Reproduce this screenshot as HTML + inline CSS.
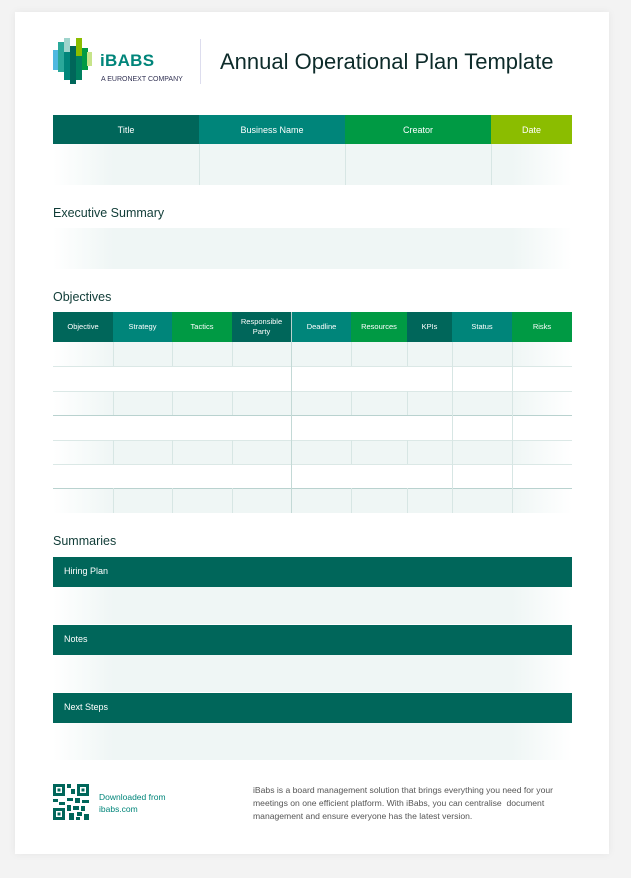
<!DOCTYPE html>
<html><head><meta charset="utf-8"><style>
*{margin:0;padding:0;box-sizing:border-box}
body{width:631px;height:878px;background:#f3f3f3;font-family:"Liberation Sans",sans-serif;position:relative;overflow:hidden}
.card{position:absolute;left:15px;top:12px;width:594px;height:842px;background:#fff;box-shadow:0 0 8px rgba(0,0,0,0.06)}
.a{position:absolute}
.sh{background:linear-gradient(90deg,#fff 0,#eff6f5 60px,#eff6f5 calc(100% - 60px),#fff 100%)}
.h{position:absolute;color:#fff;font-size:9px;display:flex;align-items:center;justify-content:center;text-align:center;line-height:10px}
.dk{background:#00665a}.tl{background:#00857a}.gr{background:#009a44}.lm{background:#8bbd00}
.t{position:absolute;font-size:12.5px;color:#103c37}
.vl{position:absolute;width:1px;background:#d7e6e4}
.hl{position:absolute;height:1px;background:#dbe8e6;left:53px;width:519px}
.bar{position:absolute;left:53px;width:519px;height:30px;background:#00665a;color:#fff;font-size:9px;padding:9px 0 0 11px}
</style></head><body>
<div class="card"></div>
<!-- logo -->
<svg class="a" style="left:53px;top:38px" width="40" height="46">
<rect x="0" y="12" width="5" height="20" fill="#4fb8e0"/>
<rect x="5" y="4" width="6" height="30" fill="#2aa89a"/>
<rect x="11" y="0" width="6" height="22" fill="#9fd4cc"/>
<rect x="11" y="14" width="6" height="28" fill="#00857a"/>
<rect x="17" y="8" width="6" height="38" fill="#00665a"/>
<rect x="23" y="0" width="6" height="20" fill="#8bbd00"/>
<rect x="23" y="18" width="6" height="24" fill="#008060"/>
<rect x="29" y="10" width="6" height="22" fill="#009a44"/>
<rect x="34" y="14" width="5" height="14" fill="#c7e48a"/>
</svg>
<div class="a" style="left:100px;top:51px;font-size:17px;font-weight:bold;color:#00857a;letter-spacing:0.3px">iBABS</div>
<div class="a" style="left:101px;top:76px;font-size:7px;color:#335">A EURONEXT COMPANY</div>
<div class="a" style="left:200px;top:39px;width:1px;height:45px;background:#dde"></div>
<div class="a" style="left:220px;top:49px;font-size:22px;color:#0d2b2a">Annual Operational Plan Template</div>
<!-- top table -->
<div class="h dk" style="left:53px;top:115px;width:146px;height:29px">Title</div>
<div class="h tl" style="left:199px;top:115px;width:146px;height:29px">Business Name</div>
<div class="h gr" style="left:345px;top:115px;width:146px;height:29px">Creator</div>
<div class="h lm" style="left:491px;top:115px;width:81px;height:29px">Date</div>
<div class="a sh" style="left:53px;top:144px;width:519px;height:41px"></div>
<div class="vl" style="left:199px;top:144px;height:41px"></div>
<div class="vl" style="left:345px;top:144px;height:41px"></div>
<div class="vl" style="left:491px;top:144px;height:41px"></div>
<div class="t" style="left:53px;top:206px">Executive Summary</div>
<div class="a sh" style="left:53px;top:228px;width:519px;height:41px"></div>
<div class="t" style="left:53px;top:290px">Objectives</div>
<!-- objectives -->
<div class="h dk" style="left:53px;top:312px;width:60px;height:30px;font-size:7.5px">Objective</div>
<div class="h tl" style="left:113px;top:312px;width:59px;height:30px;font-size:7.5px">Strategy</div>
<div class="h gr" style="left:172px;top:312px;width:60px;height:30px;font-size:7.5px">Tactics</div>
<div class="h dk" style="left:232px;top:312px;width:59px;height:30px;font-size:7.5px">Responsible<br>Party</div>
<div class="h tl" style="left:292px;top:312px;width:59px;height:30px;font-size:7.5px">Deadline</div>
<div class="h gr" style="left:351px;top:312px;width:56px;height:30px;font-size:7.5px">Resources</div>
<div class="h dk" style="left:407px;top:312px;width:45px;height:30px;font-size:7.5px">KPIs</div>
<div class="h tl" style="left:452px;top:312px;width:60px;height:30px;font-size:7.5px">Status</div>
<div class="h gr" style="left:512px;top:312px;width:60px;height:30px;font-size:7.5px">Risks</div>
<div class="a" style="left:291px;top:312px;width:1px;height:30px;background:#b9d2cf"></div>
<div class="a sh" style="left:53px;top:342px;width:519px;height:24px"></div>
<div class="a sh" style="left:53px;top:391px;width:519px;height:24px"></div>
<div class="a sh" style="left:53px;top:440px;width:519px;height:24px"></div>
<div class="a sh" style="left:53px;top:488px;width:519px;height:25px"></div>
<div class="hl" style="top:366px"></div><div class="hl" style="top:391px"></div>
<div class="hl" style="top:415px;background:#b9d2cf"></div><div class="hl" style="top:440px"></div>
<div class="hl" style="top:464px"></div><div class="hl" style="top:488px;background:#b9d2cf"></div>
<div class="vl" style="left:113px;top:342px;height:24px"></div><div class="vl" style="left:172px;top:342px;height:24px"></div><div class="vl" style="left:232px;top:342px;height:24px"></div><div class="vl" style="left:351px;top:342px;height:24px"></div><div class="vl" style="left:407px;top:342px;height:24px"></div>
<div class="vl" style="left:113px;top:391px;height:24px"></div><div class="vl" style="left:172px;top:391px;height:24px"></div><div class="vl" style="left:232px;top:391px;height:24px"></div><div class="vl" style="left:351px;top:391px;height:24px"></div><div class="vl" style="left:407px;top:391px;height:24px"></div>
<div class="vl" style="left:113px;top:440px;height:24px"></div><div class="vl" style="left:172px;top:440px;height:24px"></div><div class="vl" style="left:232px;top:440px;height:24px"></div><div class="vl" style="left:351px;top:440px;height:24px"></div><div class="vl" style="left:407px;top:440px;height:24px"></div>
<div class="vl" style="left:113px;top:488px;height:25px"></div><div class="vl" style="left:172px;top:488px;height:25px"></div><div class="vl" style="left:232px;top:488px;height:25px"></div><div class="vl" style="left:351px;top:488px;height:25px"></div><div class="vl" style="left:407px;top:488px;height:25px"></div>
<div class="vl" style="left:291px;top:342px;height:171px;background:#c3d9d6"></div>
<div class="vl" style="left:452px;top:342px;height:171px"></div>
<div class="vl" style="left:512px;top:342px;height:171px"></div>
<!-- summaries -->
<div class="t" style="left:53px;top:534px">Summaries</div>
<div class="bar" style="top:557px">Hiring Plan</div>
<div class="a sh" style="left:53px;top:587px;width:519px;height:37px"></div>
<div class="bar" style="top:625px">Notes</div>
<div class="a sh" style="left:53px;top:655px;width:519px;height:37px"></div>
<div class="bar" style="top:693px">Next Steps</div>
<div class="a sh" style="left:53px;top:723px;width:519px;height:37px"></div>
<!-- footer -->
<svg class="a" style="left:53px;top:784px" width="36" height="36" fill="#00665a">
<rect x="0" y="0" width="12" height="12"/><rect x="3" y="3" width="6" height="6" fill="#fff"/><rect x="4.5" y="4.5" width="3" height="3"/>
<rect x="24" y="0" width="12" height="12"/><rect x="27" y="3" width="6" height="6" fill="#fff"/><rect x="28.5" y="4.5" width="3" height="3"/>
<rect x="0" y="24" width="12" height="12"/><rect x="3" y="27" width="6" height="6" fill="#fff"/><rect x="4.5" y="28.5" width="3" height="3"/>
<rect x="14" y="0" width="4" height="4"/><rect x="18" y="5" width="4" height="5"/><rect x="14" y="14" width="6" height="3"/><rect x="0" y="15" width="5" height="3"/><rect x="6" y="18" width="6" height="3"/><rect x="22" y="14" width="5" height="5"/><rect x="29" y="16" width="7" height="3"/><rect x="14" y="21" width="4" height="6"/><rect x="20" y="22" width="6" height="4"/><rect x="28" y="22" width="4" height="5"/><rect x="16" y="29" width="5" height="7"/><rect x="24" y="28" width="5" height="4"/><rect x="31" y="30" width="5" height="6"/><rect x="23" y="33" width="4" height="3"/>
</svg>
<div class="a" style="left:99px;top:792px;font-size:8.5px;color:#00857a;line-height:11.5px">Downloaded from<br>ibabs.com</div>
<div class="a" style="left:253px;top:784px;font-size:8.6px;color:#555;line-height:13px;width:318px">iBabs is a board management solution that brings everything you need for your meetings on one efficient platform. With iBabs, you can centralise&nbsp; document management and ensure everyone has the latest version.</div>
</body></html>
